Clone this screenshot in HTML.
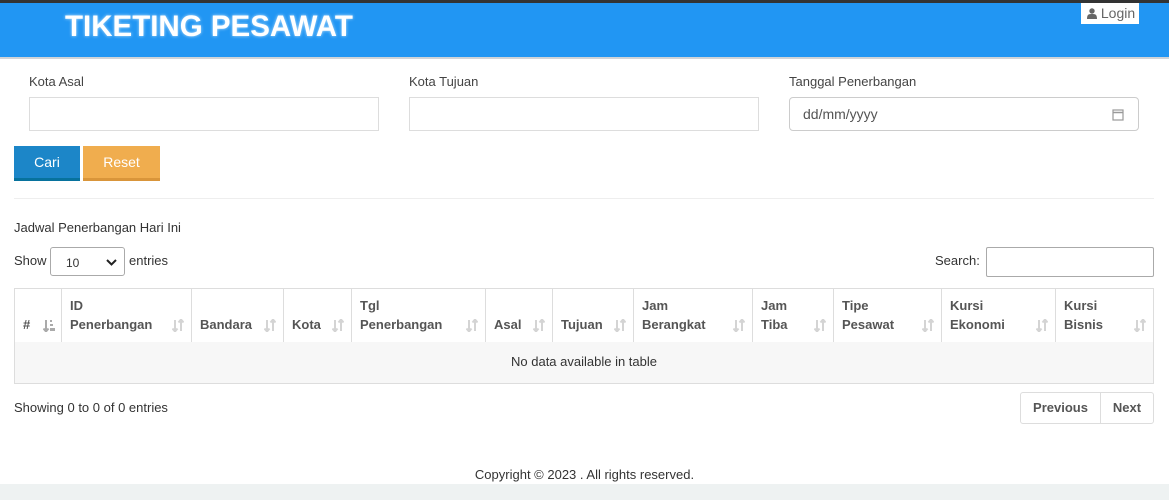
<!DOCTYPE html>
<html><head><meta charset="utf-8"><style>
*{box-sizing:border-box;margin:0;padding:0}
body{width:1169px;height:500px;position:relative;font-family:"Liberation Sans",Arial,sans-serif;font-size:13px;color:#333;background:#fff;overflow:hidden}
.a{position:absolute}
.top{left:0;top:0;width:1169px;height:3px;background:#333}
.hdr{left:0;top:3px;width:1169px;height:56px;background:#2196f3;border-bottom:2px solid #d0d4d8}
.title{left:65px;top:10px;font-size:29.5px;font-weight:bold;color:#fff;text-shadow:0 0 3px rgba(255,255,255,.7)}
.login{left:1081px;top:3px;width:58px;height:21px;background:#fff;color:#666;font-size:14px;padding:2px 0 0 6px}
.lbl{font-size:13px;color:#444}
.inp{height:34px;width:350px;border:1px solid #ddd;background:#fff}
.btn{height:35px;color:#fff;font-size:14px;text-align:center;line-height:32px}
.tbl{left:14px;top:288px;width:1140px;height:96px;border:1px solid #ddd}
.col{position:absolute;top:0;height:53px;border-left:1px solid #ddd;font-weight:bold;color:#555;font-size:13px;line-height:19px;padding:7px 0 0 8px}
.one{padding-top:26px}
.sort{position:absolute;right:7px;bottom:10px}
.pg{height:32px;border:1px solid #ddd;color:#555;font-weight:bold;text-align:center;line-height:30px}
</style></head><body>
<div class="a top"></div>
<div class="a hdr"></div>
<div class="a title">TIKETING PESAWAT</div>
<div class="a login"><svg width="10" height="11" viewBox="0 0 10 11" style="vertical-align:-1px"><circle cx="5" cy="3" r="2.7" fill="#666"/><path d="M0 11 C0 6 2 6 5 6 C8 6 10 6 10 11Z" fill="#666"/></svg> Login</div>

<div class="a lbl" style="left:29px;top:74px">Kota Asal</div>
<div class="a lbl" style="left:409px;top:74px">Kota Tujuan</div>
<div class="a lbl" style="left:789px;top:74px">Tanggal Penerbangan</div>
<div class="a inp" style="left:29px;top:97px"></div>
<div class="a inp" style="left:409px;top:97px"></div>
<div class="a inp" style="left:789px;top:97px;border-color:#ccc;border-radius:4px;font-size:14px;color:#555;padding:8px 0 0 13px">dd/mm/yyyy
<svg class="a" style="right:14px;top:10px" width="12" height="13" viewBox="0 0 12 13"><rect x="1" y="2" width="10" height="10" fill="none" stroke="#999" stroke-width="1.2"/><line x1="1" y1="4.5" x2="11" y2="4.5" stroke="#999" stroke-width="1.5"/></svg></div>
<div class="a btn" style="left:14px;top:146px;width:66px;background:#1c86c8;border-bottom:3px solid #07729d">Cari</div>
<div class="a btn" style="left:83px;top:146px;width:77px;background:#f0ad4e;border-bottom:3px solid #d9953a">Reset</div>
<div class="a" style="left:14px;top:198px;width:1140px;border-top:1px solid #eee"></div>

<div class="a" style="left:14px;top:220px;font-size:13px;color:#333">Jadwal Penerbangan Hari Ini</div>
<div class="a" style="left:14px;top:253px">Show</div>
<div class="a" style="left:50px;top:247px;width:75px;height:29px;border:1px solid #aaa;border-radius:3px;font-size:12px;padding:8px 0 0 15px">10<svg class="a" style="right:7px;top:11px" width="11" height="7" viewBox="0 0 11 7"><path d="M1 1L5.5 5.5L10 1" stroke="#222" stroke-width="2" fill="none"/></svg></div>
<div class="a" style="left:129px;top:253px">entries</div>
<div class="a" style="left:935px;top:253px">Search:</div>
<div class="a" style="left:986px;top:247px;width:168px;height:30px;border:1px solid #aaa;border-radius:2px"></div>

<svg width="0" height="0" style="position:absolute"><defs>
<g id="s"><path d="M3 1V12M0.5 9.5L3 12.5L5.5 9.5M9 12V1M6.5 3.5L9 0.5L11.5 3.5" stroke="#d4d4d4" stroke-width="2" fill="none"/></g>
</defs></svg>
<div class="a tbl">
<div class="col one" style="left:0;border-left:0;width:47px">#<svg class="sort" width="12" height="13"><path d="M3 1V12M0.5 9.5L3 12.5L5.5 9.5" stroke="#aaa" stroke-width="2" fill="none"/><rect x="7" y="1" width="2" height="2" fill="#aaa"/><rect x="7" y="5" width="3" height="2" fill="#aaa"/><rect x="7" y="9" width="5" height="3" fill="#aaa"/></svg></div>
<div class="col" style="left:46px;width:130px">ID<br>Penerbangan<svg class="sort" width="12" height="13"><use href="#s"/></svg></div>
<div class="col one" style="left:176px;width:92px">Bandara<svg class="sort" width="12" height="13"><use href="#s"/></svg></div>
<div class="col one" style="left:268px;width:68px">Kota<svg class="sort" width="12" height="13"><use href="#s"/></svg></div>
<div class="col" style="left:336px;width:134px">Tgl<br>Penerbangan<svg class="sort" width="12" height="13"><use href="#s"/></svg></div>
<div class="col one" style="left:470px;width:67px">Asal<svg class="sort" width="12" height="13"><use href="#s"/></svg></div>
<div class="col one" style="left:537px;width:81px">Tujuan<svg class="sort" width="12" height="13"><use href="#s"/></svg></div>
<div class="col" style="left:618px;width:119px">Jam<br>Berangkat<svg class="sort" width="12" height="13"><use href="#s"/></svg></div>
<div class="col" style="left:737px;width:81px">Jam<br>Tiba<svg class="sort" width="12" height="13"><use href="#s"/></svg></div>
<div class="col" style="left:818px;width:108px">Tipe<br>Pesawat<svg class="sort" width="12" height="13"><use href="#s"/></svg></div>
<div class="col" style="left:926px;width:114px">Kursi<br>Ekonomi<svg class="sort" width="12" height="13"><use href="#s"/></svg></div>
<div class="col" style="left:1040px;width:98px">Kursi<br>Bisnis<svg class="sort" width="12" height="13"><use href="#s"/></svg></div>
<div class="a" style="left:0;top:53px;width:1138px;height:41px;background:#f7f7f7;text-align:center;line-height:40px;font-size:13px">No data available in table</div>
</div>

<div class="a" style="left:14px;top:400px;font-size:13px">Showing 0 to 0 of 0 entries</div>
<div class="a pg" style="left:1020px;top:392px;width:81px;border-radius:3px 0 0 3px">Previous</div>
<div class="a pg" style="left:1100px;top:392px;width:54px;border-radius:0 3px 3px 0">Next</div>

<div class="a" style="left:0;top:484px;width:1169px;height:16px;background:#eef2f2"></div>
<div class="a" style="left:0;top:467px;width:1169px;text-align:center;font-size:13px">Copyright © 2023 . All rights reserved.</div>
</body></html>
